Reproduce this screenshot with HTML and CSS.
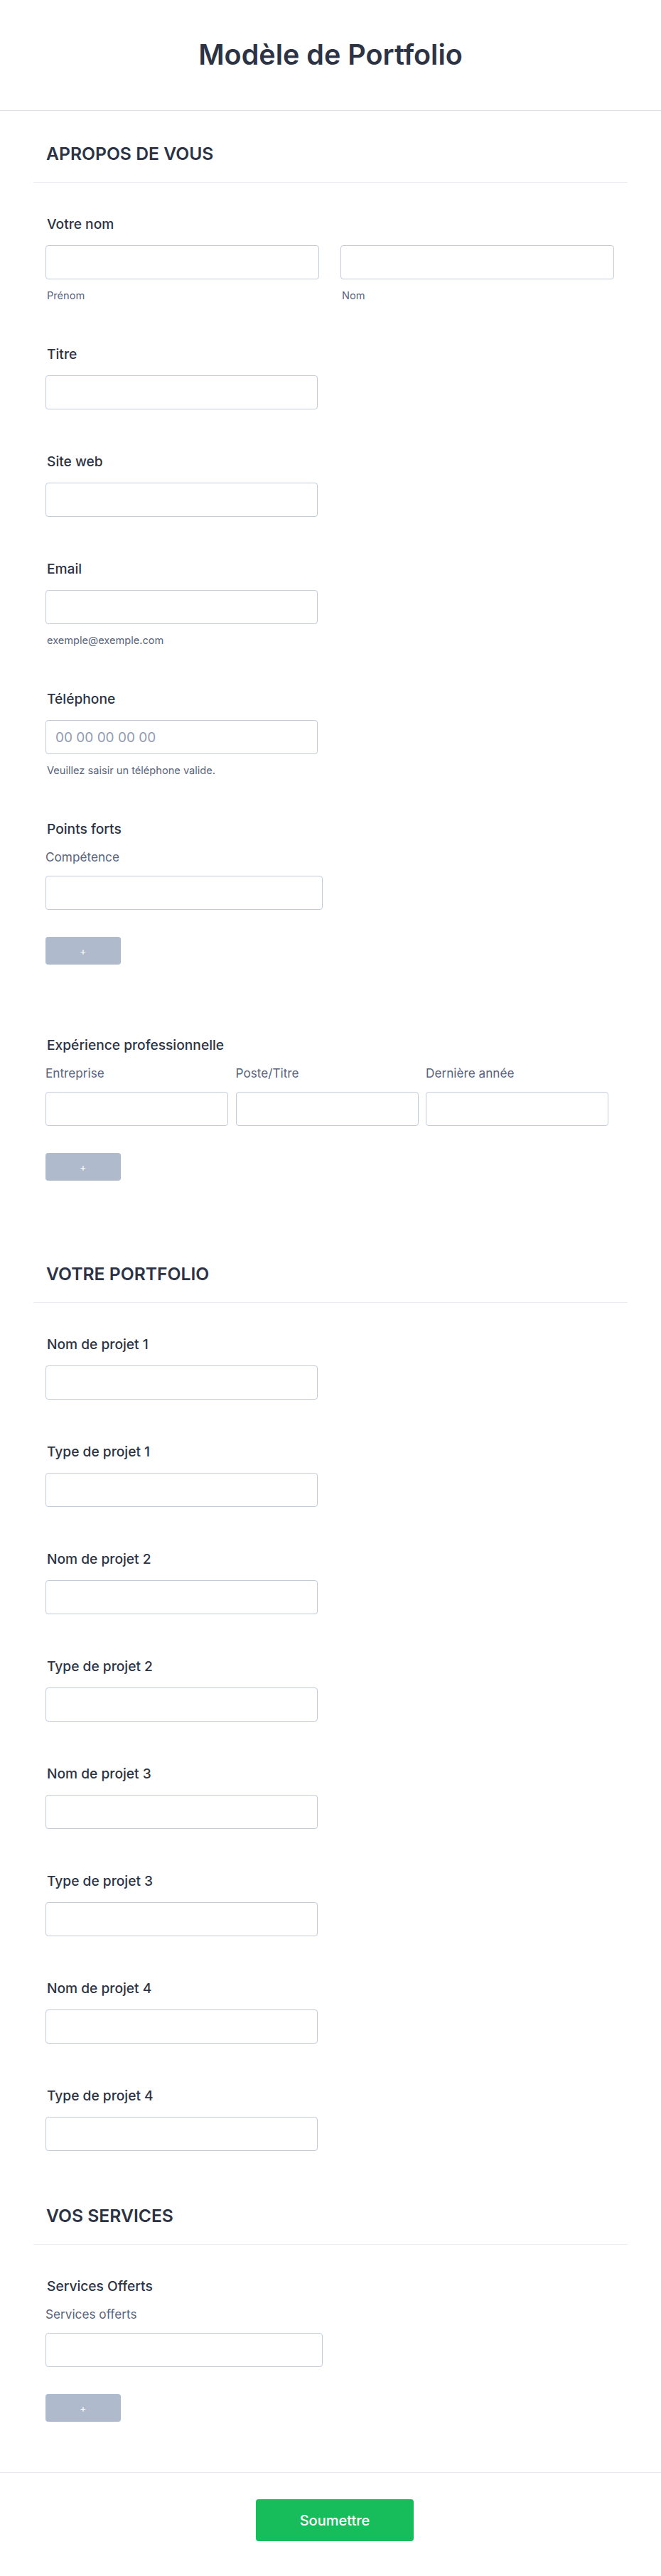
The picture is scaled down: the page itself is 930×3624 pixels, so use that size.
FILE: index.html
```html
<!DOCTYPE html>
<html lang="fr">
<head>
<meta charset="utf-8">
<title>Modèle de Portfolio</title>
<link rel="stylesheet" href="styles.css">
</head>
<body>
<header class="form-header">
  <h1 class="form-title">Modèle de Portfolio</h1>
</header>

<main class="form-body">
  <section class="section">
    <div class="section-head"><h2 class="section-title">APROPOS DE VOUS</h2></div>
    <div class="fields">
      <div class="field">
        <label class="label">Votre nom</label>
        <div class="grid2">
          <div class="col"><input class="input" type="text"><span class="sublabel">Prénom</span></div>
          <div class="col"><input class="input" type="text"><span class="sublabel">Nom</span></div>
        </div>
      </div>
      <div class="field">
        <label class="label">Titre</label>
        <input class="input std" type="text">
      </div>
      <div class="field">
        <label class="label">Site web</label>
        <input class="input std" type="text">
      </div>
      <div class="field">
        <label class="label">Email</label>
        <input class="input std" type="text">
        <span class="sublabel">exemple@exemple.com</span>
      </div>
      <div class="field">
        <label class="label">Téléphone</label>
        <input class="input std" type="text" placeholder="00 00 00 00 00">
        <span class="sublabel">Veuillez saisir un téléphone valide.</span>
      </div>
      <div class="field list">
        <label class="label">Points forts</label>
        <span class="collabel">Compétence</span>
        <input class="input wide" type="text">
        <button class="add" type="button">+</button>
      </div>
      <div class="field list">
        <label class="label">Expérience professionnelle</label>
        <div class="grid3">
          <span class="collabel">Entreprise</span>
          <span class="collabel">Poste/Titre</span>
          <span class="collabel">Dernière année</span>
          <input class="input" type="text">
          <input class="input" type="text">
          <input class="input" type="text">
        </div>
        <button class="add" type="button">+</button>
      </div>
    </div>
  </section>

  <section class="section">
    <div class="section-head"><h2 class="section-title">VOTRE PORTFOLIO</h2></div>
    <div class="fields">
      <div class="field"><label class="label">Nom de projet 1</label><input class="input std" type="text"></div>
      <div class="field"><label class="label">Type de projet 1</label><input class="input std" type="text"></div>
      <div class="field"><label class="label">Nom de projet 2</label><input class="input std" type="text"></div>
      <div class="field"><label class="label">Type de projet 2</label><input class="input std" type="text"></div>
      <div class="field"><label class="label">Nom de projet 3</label><input class="input std" type="text"></div>
      <div class="field"><label class="label">Type de projet 3</label><input class="input std" type="text"></div>
      <div class="field"><label class="label">Nom de projet 4</label><input class="input std" type="text"></div>
      <div class="field"><label class="label">Type de projet 4</label><input class="input std" type="text"></div>
    </div>
  </section>

  <section class="section section-last">
    <div class="section-head"><h2 class="section-title">VOS SERVICES</h2></div>
    <div class="fields">
      <div class="field list">
        <label class="label">Services Offerts</label>
        <span class="collabel">Services offerts</span>
        <input class="input wide" type="text">
        <button class="add" type="button">+</button>
      </div>
    </div>
  </section>
</main>

<footer class="form-footer">
  <button class="submit" type="button">Soumettre</button>
</footer>
</body>
</html>
```

FILE: styles.css
```css
* { box-sizing: border-box; }

body {
  margin: 0;
  background: #ffffff;
  font-family: Inter, "Noto Sans", "Liberation Sans", sans-serif;
  color: #2c3345;
}

.form-header {
  padding: 53px 0 54px;
  border-bottom: 1px solid #dfe1e8;
  text-align: center;
}

.form-title {
  margin: 0;
  font-size: 39.5px;
  line-height: 48px;
  font-weight: 600;
  color: #2c3345;
}

.form-body {
  padding: 30px 47px 0;
}

.section-head {
  padding: 14px 18px 24px;
  border-bottom: 1px solid #ebecf2;
}

.section-title {
  margin: 0;
  font-size: 24.7px;
  line-height: 32px;
  font-weight: 600;
  color: #2c3345;
}

.fields {
  padding: 46px 17px 0;
}

.field {
  display: flex;
  flex-direction: column;
  align-items: flex-start;
  margin-bottom: 61px;
}

.field.list { margin-bottom: 101px; }
.section-last .field:last-child { margin-bottom: 71px; }

.label {
  display: block;
  padding-left: 2px;
  margin-bottom: 18px;
  font-size: 19.2px;
  line-height: 24px;
  font-weight: 500;
  color: #2c3345;
}

.input {
  display: block;
  width: 100%;
  height: 48px;
  margin: 0;
  padding: 0 13px;
  border: 1px solid #c3cad8;
  border-radius: 4px;
  background: #ffffff;
  font-family: inherit;
  font-size: 19px;
  color: #2c3345;
  outline: none;
}

.input::placeholder { color: #8f9bb3; }

.input.std { width: 383px; }
.input.wide { width: 390px; }

.grid2 {
  display: grid;
  grid-template-columns: 1fr 1fr;
  column-gap: 30px;
  width: 800px;
}

.col { display: flex; flex-direction: column; }

.sublabel {
  display: block;
  margin-top: 15px;
  padding-left: 2px;
  font-size: 14.6px;
  line-height: 17px;
  color: #57647e;
}

.collabel {
  display: block;
  margin-bottom: 16px;
  font-size: 17.2px;
  line-height: 20px;
  color: #57647e;
}

.grid3 {
  display: grid;
  grid-template-columns: repeat(3, 1fr);
  column-gap: 10.5px;
  width: 792px;
}

.add {
  margin-top: 38px;
  width: 106px;
  height: 39px;
  border: 0;
  border-radius: 4px;
  background: #afbacd;
  color: #ffffff;
  font-family: inherit;
  font-size: 14px;
  line-height: 1;
  padding: 0;
}

.form-footer {
  border-top: 1px solid #e8e9ef;
  padding: 37px 0 51px 12px;
  text-align: center;
}

.submit {
  width: 222px;
  height: 59px;
  border: 0;
  border-radius: 4px;
  background: #18bd5b;
  color: #ffffff;
  font-family: inherit;
  font-size: 20px;
  font-weight: 500;
  padding: 0;
}
```
